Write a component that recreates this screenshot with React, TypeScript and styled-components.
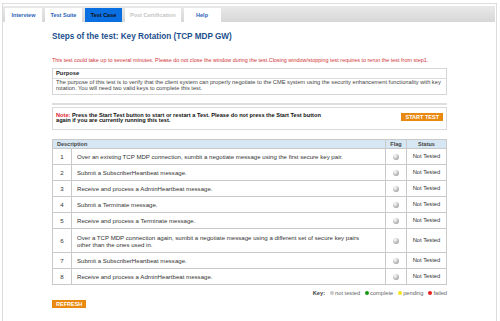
import React from "react";
import styled, { createGlobalStyle } from "styled-components";

const GlobalStyle = createGlobalStyle`
  html, body {
    margin: 0;
    padding: 0;
    background: #ffffff;
  }
  body {
    font-family: "Liberation Sans", Arial, sans-serif;
    color: #333333;
  }
`;

interface Step {
  id: number;
  text: string;
  tall?: boolean;
}

const steps: Step[] = [
  {
    id: 1,
    text: "Over an existing TCP MDP connection, sumbit a negotiate message using the first secure key pair.",
  },
  { id: 2, text: "Submit a SubscriberHeartbeat message." },
  { id: 3, text: "Receive and process a AdminHeartbeat message." },
  { id: 4, text: "Submit a Terminate message." },
  { id: 5, text: "Receive and process a Terminate message." },
  {
    id: 6,
    text: "Over a TCP MDP connection again, sumbit a negotiate message using a different set of secure key pairs other than the ones used in.",
    tall: true,
  },
  { id: 7, text: "Submit a SubscriberHeartbeat message." },
  { id: 8, text: "Receive and process a AdminHeartbeat message." },
];

const tabs = [
  { label: "Interview", state: "normal" },
  { label: "Test Suite", state: "normal" },
  { label: "Test Case", state: "active" },
  { label: "Post Certification", state: "disabled" },
  { label: "Help", state: "normal" },
] as const;

const legend = [
  { label: "not tested", color: "#c8c8c8" },
  { label: "complete", color: "#139a13" },
  { label: "pending", color: "#f2e418" },
  { label: "failed", color: "#e61e1e" },
];

const App: React.FC = () => {
  return (
    <>
      <GlobalStyle />
      <Frame>
        <TabBar>
          {tabs.map((t) => (
            <Tab key={t.label} state={t.state}>
              {t.label}
            </Tab>
          ))}
        </TabBar>
        <Content>
          <Title>Steps of the test: Key Rotation (TCP MDP GW)</Title>
          <Warning>
            This test could take up to several minutes. Please do not close the
            window during the test.Closing window/stopping test requires to rerun
            the test from step1.
          </Warning>
          <PurposeBox>
            <PurposeHeader>Purpose</PurposeHeader>
            <PurposeText>
              The purpose of this test is to verify that the client system can
              properly negotiate to the CME system using the security enhancement
              functionality with key rotation. You will need two valid keys to
              complete this test.
            </PurposeText>
          </PurposeBox>
          <Separator />
          <NoteBox>
            <NoteText>
              <NoteLabel>Note:</NoteLabel> Press the Start Test button to start or
              restart a Test. Please do not press the Start Test button
              <br />
              again if you are currently running this test.
            </NoteText>
            <OrangeButton>START TEST</OrangeButton>
          </NoteBox>
          <StepsTable>
            <colgroup>
              <Col w={19} />
              <col />
              <Col w={21} />
              <Col w={40} />
            </colgroup>
            <thead>
              <tr>
                <HeadCell colSpan={2} align="left">
                  Description
                </HeadCell>
                <HeadCell>Flag</HeadCell>
                <HeadCell>Status</HeadCell>
              </tr>
            </thead>
            <tbody>
              {steps.map((s) => (
                <StepRow key={s.id} tall={s.tall}>
                  <NumCell>{s.id}</NumCell>
                  <DescCell>{s.text}</DescCell>
                  <FlagCell>
                    <Sphere />
                  </FlagCell>
                  <StatusCell>Not Tested</StatusCell>
                </StepRow>
              ))}
            </tbody>
          </StepsTable>
          <Legend>
            <LegendKey>Key:</LegendKey>
            {legend.map((l) => (
              <LegendItem key={l.label}>
                <Dot color={l.color} />
                {l.label}
              </LegendItem>
            ))}
          </Legend>
          <OrangeButton>REFRESH</OrangeButton>
        </Content>
      </Frame>
    </>
  );
};

export default App;

const Frame = styled.div`
  margin: 3px 3px 0 2px;
  min-height: 318px;
  box-sizing: border-box;
  border-top: 1px solid #dddddd;
  border-left: 1px solid #dcdcdc;
  border-right: 1px solid #dcdcdc;
`;

const TabBar = styled.div`
  display: flex;
  align-items: flex-end;
  gap: 3px;
  height: 16px;
  margin: 2px 1px 0 0;
  padding-left: 2px;
  background: linear-gradient(#e9e9e9, #d7d7d7);
`;

const Tab = styled.div<{ state: "normal" | "active" | "disabled" }>`
  min-width: 27px;
  height: 14px;
  padding: 0 5px;
  line-height: 14px;
  text-align: center;
  font-size: 5.5px;
  font-weight: bold;
  background: ${(p) => (p.state === "active" ? "#0a6fe0" : "#ffffff")};
  color: ${(p) =>
    p.state === "active" ? "#101010" : p.state === "disabled" ? "#c4c4c4" : "#2a5fb8"};
`;

const Content = styled.div`
  width: 395px;
  margin-left: 49px;
  padding-bottom: 12px;
`;

const Title = styled.h1`
  margin: 10px 0 0;
  font-size: 8.2px;
  line-height: 10px;
  font-weight: bold;
  color: #1c4f8e;
`;

const Warning = styled.p`
  margin: 15px 0 0;
  font-size: 5.45px;
  line-height: 7px;
  color: #d0353a;
  white-space: nowrap;
`;

const PurposeBox = styled.div`
  margin-top: 4px;
  border: 1px solid #d6d6d6;
`;

const PurposeHeader = styled.div`
  padding: 0 3px;
  height: 9px;
  line-height: 9px;
  font-size: 5.8px;
  font-weight: bold;
  color: #222222;
  border-bottom: 1px solid #dddddd;
`;

const PurposeText = styled.div`
  padding: 1px 3px 2px;
  font-size: 5.7px;
  line-height: 5.8px;
  color: #444444;
`;

const Separator = styled.div`
  margin-top: 8px;
  height: 2px;
  background: #dedede;
`;

const NoteBox = styled.div`
  display: flex;
  align-items: flex-start;
  justify-content: space-between;
  margin-top: 2px;
  padding: 5px 3px 5px;
  border: 1px solid #dadada;
`;

const NoteText = styled.div`
  font-size: 5.65px;
  line-height: 5.8px;
  font-weight: bold;
  color: #111111;
`;

const NoteLabel = styled.span`
  color: #e0242a;
`;

const OrangeButton = styled.button`
  display: block;
  height: 8px;
  padding: 0 4px;
  margin: 0;
  border: none;
  background: #e9890f;
  color: #ffffff;
  font-family: inherit;
  font-size: 5.5px;
  font-weight: bold;
  line-height: 8px;
`;

const StepsTable = styled.table`
  width: 100%;
  margin-top: 9px;
  border-collapse: collapse;
  table-layout: fixed;
`;

const Col = styled.col<{ w: number }>`
  width: ${(p) => p.w}px;
`;

const HeadCell = styled.th`
  height: 8px;
  padding: 0 4px;
  background: #d6e6f2;
  border: 1px solid #c9c9c9;
  font-size: 5.5px;
  font-weight: bold;
  color: #444444;
  text-align: ${(p) => (p.align === "left" ? "left" : "center")};
`;

const StepRow = styled.tr<{ tall?: boolean }>`
  height: ${(p) => (p.tall ? "24px" : "16px")};
`;

const BodyCell = styled.td`
  border: 1px solid #c9c9c9;
  font-size: 6.1px;
  line-height: 7px;
  color: #333333;
  padding: 0;
`;

const NumCell = styled(BodyCell)`
  text-align: center;
`;

const DescCell = styled(BodyCell)`
  padding: 0 14px 0 5px;
`;

const FlagCell = styled(BodyCell)`
  text-align: center;
`;

const StatusCell = styled(BodyCell)`
  text-align: center;
  font-size: 5.8px;
`;

const Sphere = styled.span`
  display: inline-block;
  width: 6px;
  height: 6px;
  border-radius: 50%;
  vertical-align: middle;
  background: radial-gradient(circle at 35% 30%, #ffffff, #bdbdbd 55%, #8a8a8a);
`;

const Legend = styled.div`
  display: flex;
  justify-content: flex-end;
  align-items: center;
  gap: 5px;
  margin: 4px 0 3px;
  font-size: 5.7px;
  line-height: 8px;
  color: #666666;
`;

const LegendKey = styled.span`
  font-weight: bold;
  color: #444444;
`;

const LegendItem = styled.span`
  display: inline-flex;
  align-items: center;
  gap: 1px;
`;

const Dot = styled.span<{ color: string }>`
  display: inline-block;
  width: 4px;
  height: 4px;
  border-radius: 50%;
  background: ${(p) => p.color};
`;
